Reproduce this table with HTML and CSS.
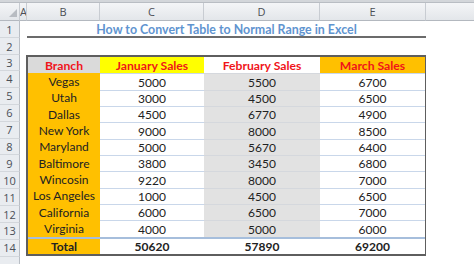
FILE: index.html
```html
<!DOCTYPE html>
<html>
<head>
<meta charset="utf-8">
<link rel="stylesheet" href="styles.css">
</head>
<body>
<div class="strip"></div>
<div class="sheet">
  <div class="corner"><svg width="10" height="10" viewBox="0 0 10 10"><polygon points="9,1 9,9 1,9" fill="#b8bcc2"/></svg></div>
  <div class="ch cha">A</div>
  <div class="ch">B</div>
  <div class="ch">C</div>
  <div class="ch">D</div>
  <div class="ch">E</div>
  <div class="ch chf"></div>

  <div class="rh">1</div>
  <div class="cell"></div>
  <div class="title">How to Convert Table to Normal Range in Excel</div>
  <div class="cell"></div>

  <div class="rh">2</div>
  <div class="cell"></div>
  <div class="cell span4"></div>
  <div class="cell"></div>

  <div class="rh">3</div>
  <div class="cell lead"></div>
  <div class="tbl">
    <div class="hd hb">Branch</div>
    <div class="hd hc">January Sales</div>
    <div class="hd">February Sales</div>
    <div class="hd he">March Sales</div>

    <div class="b">Vegas</div><div class="c">5000</div><div class="d">5500</div><div class="e">6700</div>
    <div class="b">Utah</div><div class="c">3000</div><div class="d">4500</div><div class="e">6500</div>
    <div class="b">Dallas</div><div class="c">4500</div><div class="d">6770</div><div class="e">4900</div>
    <div class="b">New York</div><div class="c">9000</div><div class="d">8000</div><div class="e">8500</div>
    <div class="b">Maryland</div><div class="c">5000</div><div class="d">5670</div><div class="e">6400</div>
    <div class="b">Baltimore</div><div class="c">3800</div><div class="d">3450</div><div class="e">6800</div>
    <div class="b">Wincosin</div><div class="c">9220</div><div class="d">8000</div><div class="e">7000</div>
    <div class="b">Los Angeles</div><div class="c">1000</div><div class="d">4500</div><div class="e">6500</div>
    <div class="b">California</div><div class="c">6000</div><div class="d">6500</div><div class="e">7000</div>
    <div class="b">Virginia</div><div class="c">4000</div><div class="d">5000</div><div class="e">6000</div>

    <div class="b t">Total</div><div class="c t">50620</div><div class="d t">57890</div><div class="e t">69200</div>
  </div>
  <div class="cell tail"></div>

  <div class="rh">4</div>
  <div class="rh">5</div>
  <div class="rh">6</div>
  <div class="rh">7</div>
  <div class="rh">8</div>
  <div class="rh">9</div>
  <div class="rh">10</div>
  <div class="rh">11</div>
  <div class="rh">12</div>
  <div class="rh">13</div>
  <div class="rh">14</div>
  <div class="rh"></div><div class="cell"></div><div class="cell span4"></div><div class="cell"></div>
</div>
</body>
</html>
```
FILE: styles.css
```css
html, body {
  margin: 0;
  padding: 0;
  background: #ffffff;
  overflow: hidden;
}
body {
  width: 474px;
  height: 264px;
  font-family: "Lato", "Liberation Sans", sans-serif;
}
.strip {
  height: 3px;
  background: #d3d6da;
  border-bottom: 1px solid #b9bdc3;
  box-sizing: border-box;
}
.sheet {
  display: grid;
  grid-template-columns: 20px 7px 73px 104px 116px 106px 48px;
  grid-template-rows: 18px 17px 17px 16px repeat(11, 16.9px) 10px;
  height: 261px;
  overflow: hidden;
}
.corner, .ch {
  background: linear-gradient(#f4f5f7, #e3e6ea);
  border-right: 1px solid #c8ccd2;
  border-bottom: 1px solid #b3b8bf;
  box-sizing: border-box;
}
.corner {
  display: flex;
  align-items: flex-end;
  justify-content: flex-end;
  padding: 0 1px 2px 0;
}
.ch {
  display: flex;
  align-items: center;
  justify-content: center;
  font-family: "Open Sans", "DejaVu Sans", sans-serif;
  font-size: 11px;
  color: #4b4f55;
  overflow: hidden;
}
.cha {
  justify-content: flex-start;
}
.chf { border-right: none; }
.rh {
  grid-column: 1;
  background: #e9ecf0;
  border-right: 1px solid #b9bec5;
  border-bottom: 1px solid #d3d7dc;
  box-sizing: border-box;
  display: flex;
  align-items: center;
  justify-content: center;
  font-family: "Open Sans", "DejaVu Sans", sans-serif;
  font-size: 11px;
  color: #4a4f57;
  overflow: hidden;
}
.cell {
  background: #ffffff;
}
.span4 { grid-column: span 4; }
.title {
  grid-column: span 4;
  display: flex;
  align-items: center;
  justify-content: center;
  font-weight: 700;
  font-size: 12.4px;
  color: #5f94d0;
  border-bottom: 3px solid #6b6b6b;
  box-sizing: border-box;
  padding-top: 2px;
  height: 18px;
}
.lead { grid-row: span 12; }
.tail { grid-row: span 12; }
.tbl {
  grid-column: 3 / span 4;
  grid-row: span 12;
  display: grid;
  grid-template-columns: 72px 104px 116px 105px;
  grid-template-rows: repeat(11, 1fr) 17px;
  border: 2px solid #5e5e5e;
  margin-left: -1px;
  margin-right: -1px;
  margin-bottom: 1px;
  box-sizing: border-box;
  font-size: 12px;
  color: #222222;
}
.tbl > div {
  display: flex;
  align-items: center;
  justify-content: center;
  white-space: nowrap;
  box-sizing: border-box;
}
.hd {
  font-weight: 700;
  font-size: 12.2px;
  color: #f0141a;
  background: #ffffff;
}
.hb { background: #dadada; }
.hc { background: #ffff00; }
.he { background: #ffc000; }
.b { background: #ffc000; }
.c, .e {
  background: #ffffff;
  border-top: 1px solid #c9d7ea;
}
.d {
  background: #e2e2e2;
  border-top: 1px solid #d5d8dd;
}
.tbl > .t {
  font-weight: 700;
  background: #ffffff;
  border-top: 2px solid #a6bedc;
}
.tbl > .b.t { background: #ffc000; }
```
